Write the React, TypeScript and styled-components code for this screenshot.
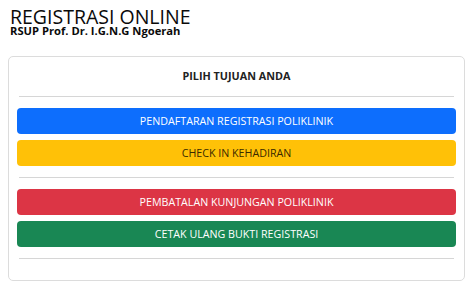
import React from 'react';
import styled, { createGlobalStyle } from 'styled-components';

const GlobalStyle = createGlobalStyle`
  body {
    margin: 0;
    background: #ffffff;
    font-family: "Open Sans", "Noto Sans", sans-serif;
    color: #212529;
  }
`;

type Variant = 'primary' | 'warning' | 'danger' | 'success';

const variants: Record<Variant, { bg: string; fg: string }> = {
  primary: { bg: '#0d6efd', fg: '#ffffff' },
  warning: { bg: '#ffc107', fg: '#3a2a00' },
  danger: { bg: '#dc3545', fg: '#ffffff' },
  success: { bg: '#198754', fg: '#ffffff' },
};

const App: React.FC = () => {
  return (
    <>
      <GlobalStyle />
      <Page>
        <Header>
          <Title>REGISTRASI ONLINE</Title>
          <Subtitle>RSUP Prof. Dr. I.G.N.G Ngoerah</Subtitle>
        </Header>
        <Card>
          <CardTitle>PILIH TUJUAN ANDA</CardTitle>
          <Divider />
          <ButtonGroup>
            <MenuButton $variant="primary">PENDAFTARAN REGISTRASI POLIKLINIK</MenuButton>
            <MenuButton $variant="warning">CHECK IN KEHADIRAN</MenuButton>
          </ButtonGroup>
          <Divider />
          <ButtonGroup>
            <MenuButton $variant="danger">PEMBATALAN KUNJUNGAN POLIKLINIK</MenuButton>
            <MenuButton $variant="success">CETAK ULANG BUKTI REGISTRASI</MenuButton>
          </ButtonGroup>
          <Divider />
        </Card>
      </Page>
    </>
  );
};

const Page = styled.div`
  padding: 8px 9px 0 8px;
`;

const Header = styled.div`
  padding-left: 2px;
  margin-bottom: 20px;
`;

const Title = styled.h1`
  margin: 0;
  font-size: 19.5px;
  font-weight: 500;
  line-height: 18px;
  color: #0a0a0a;
`;

const Subtitle = styled.div`
  font-size: 11.2px;
  font-weight: 700;
  line-height: 10px;
  color: #0a0a0a;
`;

const Card = styled.div`
  border: 1px solid #dcdcdc;
  border-radius: 5px;
  padding: 12px 8px 21px;
  display: flex;
  flex-direction: column;
`;

const CardTitle = styled.div`
  text-align: center;
  font-size: 10.8px;
  font-weight: 700;
  color: #222;
  line-height: 14px;
`;

const Divider = styled.hr`
  margin: 0 2px;
  border: 0;
  border-top: 1px solid #d6d6d6;
  ${CardTitle} + & {
    margin-top: 13px;
  }
`;

const ButtonGroup = styled.div`
  display: flex;
  flex-direction: column;
  gap: 6px;
  margin: 11px 0 11px;
`;

const MenuButton = styled.button<{ $variant: Variant }>`
  height: 26px;
  border: none;
  border-radius: 4px;
  background: ${p => variants[p.$variant].bg};
  color: ${p => variants[p.$variant].fg};
  font-family: "Open Sans", "Noto Sans", sans-serif;
  font-size: 10.7px;
  padding: 0 8px;
  cursor: pointer;
`;

export default App;
